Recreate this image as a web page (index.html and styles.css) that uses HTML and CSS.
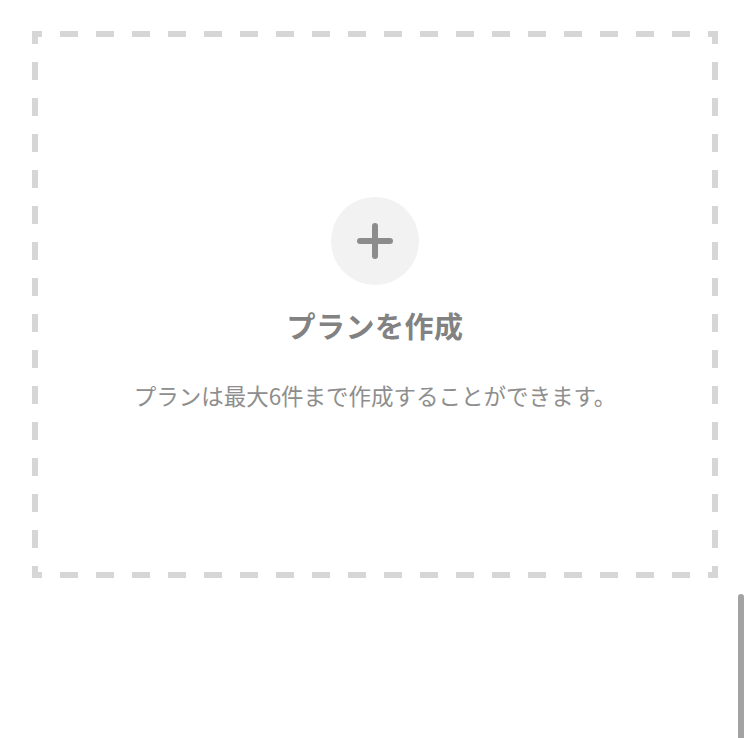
FILE: index.html
```html
<!DOCTYPE html>
<html lang="ja">
<head>
<meta charset="utf-8">
<title>プランを作成</title>
<link rel="stylesheet" href="styles.css">
</head>
<body>
<main class="page">
  <section class="create-card">
    <div class="plus-circle">
      <svg class="plus-icon" width="36" height="36" viewBox="0 0 36 36" aria-hidden="true">
        <path d="M18 3 V33 M3 18 H33" stroke="#8c8c8c" stroke-width="6" stroke-linecap="round" fill="none"/>
      </svg>
    </div>
    <h2 class="create-title">プランを作成</h2>
    <p class="create-note">プランは最大6件まで作成することができます。</p>
  </section>
</main>
<div class="scroll-thumb"></div>
</body>
</html>
```
FILE: styles.css
```css
html, body {
  margin: 0;
  padding: 0;
  background: #ffffff;
}
body {
  font-family: "Noto Sans CJK JP", "Noto Sans", sans-serif;
  width: 750px;
  height: 738px;
  overflow: hidden;
  position: relative;
}
.page {
  padding: 31px 32px 0 32px;
}
.create-card {
  box-sizing: border-box;
  height: 547px;
  background:
    repeating-linear-gradient(to right, #d6d6d6 0 10px, transparent 10px 28px, #d6d6d6 28px 36px) left top / 100% 6px no-repeat,
    repeating-linear-gradient(to right, #d6d6d6 0 10px, transparent 10px 28px, #d6d6d6 28px 36px) left bottom / 100% 6px no-repeat,
    repeating-linear-gradient(to bottom, #d6d6d6 0 13px, transparent 13px 31px, #d6d6d6 31px 36px) left top / 6px 100% no-repeat,
    repeating-linear-gradient(to bottom, #d6d6d6 0 13px, transparent 13px 31px, #d6d6d6 31px 36px) right top / 6px 100% no-repeat,
    #ffffff;
  display: flex;
  flex-direction: column;
  align-items: center;
  justify-content: flex-start;
  padding-top: 166px;
}
.plus-circle {
  width: 88px;
  height: 88px;
  border-radius: 50%;
  background: #f2f2f2;
  display: flex;
  align-items: center;
  justify-content: center;
}
.create-title {
  margin: 20px 0 0 0;
  font-size: 29px;
  line-height: 40px;
  font-weight: 700;
  color: #828282;
  letter-spacing: 0.5px;
}
.create-note {
  margin: 34px 0 0 0;
  font-size: 22.5px;
  line-height: 32px;
  font-weight: 400;
  color: #8e8e8e;
}
.scroll-thumb {
  position: absolute;
  left: 738px;
  top: 594px;
  width: 6px;
  height: 160px;
  border-radius: 3px;
  background: #a3a3a3;
}
```
